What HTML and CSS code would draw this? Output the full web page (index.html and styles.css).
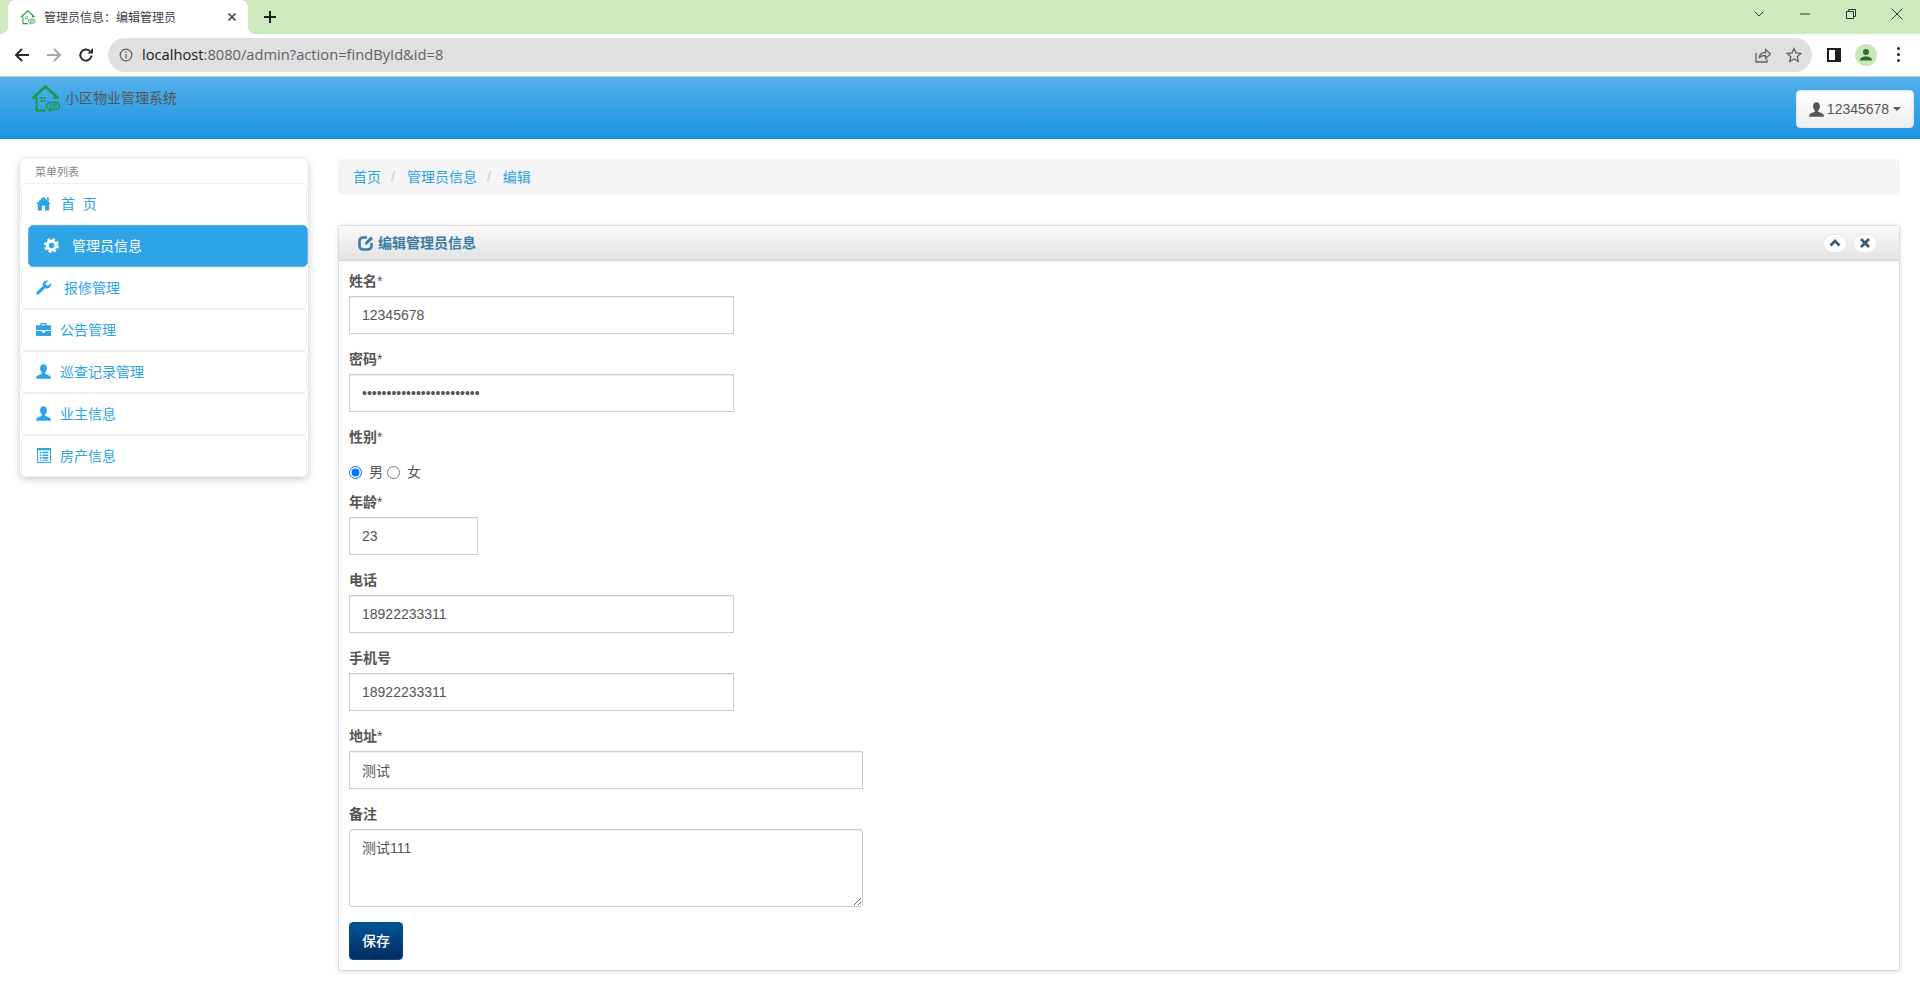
FILE: index.html
```html
<!DOCTYPE html>
<html lang="zh-CN">
<head>
<meta charset="utf-8">
<title>管理员信息：编辑管理员</title>
<link rel="stylesheet" href="styles.css">
</head>
<body>
<svg class="defs" width="0" height="0" aria-hidden="true">
  <symbol id="logo" viewBox="0 0 30 28">
    <path d="M1.5 13.5 14.5 1.5 27.5 13.5" fill="none" stroke="currentColor" stroke-width="2.4"/>
    <path d="M5.5 12v13.5h9M23.5 11v3" fill="none" stroke="currentColor" stroke-width="2"/>
    <path d="M9.5 12h2v2h-2zM12.5 12h2v2h-2zM9.5 15h2v2h-2zM12.5 15h2v2h-2z" fill="currentColor"/>
    <rect x="15.500" y="17.500" width="13" height="7" rx="3.500" fill="none" stroke="currentColor" stroke-width="1.400"/>
    <path d="M18 20h8M18 22h8" stroke="currentColor" stroke-width="1"/>
    <path d="M18.500 25v2.500l3-2.500z" fill="currentColor"/>
  </symbol>
  <symbol id="i-home" viewBox="0 0 14 14"><path d="M7 .8 14 7.400H12.300V13.500H8.500V9H5.500V13.500H1.700V7.400H0ZM10.200 1.500H12V5.200L10.200 3.500Z"/></symbol>
  <symbol id="i-user" viewBox="0 0 14 14"><path d="M7 .3C9 .3 10.200 1.800 10.200 4.100 10.200 5.700 9.400 7 8.600 7.800V9L13.400 11.200 14 13.700H0L.6 11.200 5.400 9V7.800C4.600 7 3.800 5.700 3.800 4.100 3.800 1.800 5 .3 7 .3Z"/></symbol>
  <symbol id="i-case" viewBox="0 0 14 14"><path fill-rule="evenodd" d="M5 1H9A1 1 0 0 1 10 2V3H14V7.500H0V3H4V2A1 1 0 0 1 5 1ZM5.200 2V3H8.800V2ZM0 8.500H5.500V9.800H8.500V8.500H14V13H0Z"/></symbol>
  <symbol id="i-wrench" viewBox="0 0 14 14"><path d="M14 2.800 11.300 5.300 9.500 4.800 9 3 11.500.6A4.200 4.200 0 0 0 6.300 5.700L.6 11.300A1.500 1.500 0 0 0 2.700 13.400L8.400 7.700A4.200 4.200 0 0 0 14 2.800Z"/></symbol>
  <symbol id="i-list" viewBox="0 0 14 14"><path fill-rule="evenodd" d="M1 0H14V14H1ZM2 2V13H13V2ZM3.500 3.500H5V5H3.500ZM6 3.500H11.500V5H6ZM3.500 6H5V7.500H3.500ZM6 6H11.500V7.500H6ZM3.500 8.500H5V10H3.500ZM6 8.500H11.500V10H6ZM3.500 11H5V12H3.500ZM6 11H11.500V12H6Z"/></symbol>
</svg>

<div class="tabstrip">
  <div class="tab">
    <svg class="tab-logo"><use href="#logo"/></svg>
    <span class="tab-title">管理员信息：编辑管理员</span>
    <svg class="tab-close" viewBox="0 0 10 10"><path d="M1.500 1.500 8.500 8.500M8.500 1.500 1.500 8.500"/></svg>
  </div>
  <svg class="new-tab" viewBox="0 0 12 12"><path d="M6 0V12M0 6H12"/></svg>
  <div class="win-controls">
    <svg class="win-ico" viewBox="0 0 14 14"><path d="M2.500 4.500 7 9 11.500 4.500"/></svg>
    <svg class="win-ico" viewBox="0 0 14 14"><path d="M2 7H12"/></svg>
    <svg class="win-ico" viewBox="0 0 14 14"><path d="M2.500 4.500H9.500V11.500H2.500ZM4.500 4.500V2.500H11.500V9.500H9.500"/></svg>
    <svg class="win-ico" viewBox="0 0 14 14"><path d="M1.500 1.500 12.500 12.500M12.500 1.500 1.500 12.500"/></svg>
  </div>
</div>

<div class="toolbar">
  <svg class="nav-ico" viewBox="0 0 16 16"><path d="M15 8H2M8 2 2 8 8 14"/></svg>
  <svg class="nav-ico nav-off" viewBox="0 0 16 16"><path d="M1 8H14M8 2 14 8 8 14"/></svg>
  <svg class="nav-ico" viewBox="0 0 16 16"><path d="M13.500 8.500A5.600 5.600 0 1 1 11.800 4"/><path class="solid" d="M9.500 6.500H15V1Z"/></svg>
  <div class="omnibox">
    <svg class="info-ico" viewBox="0 0 14 14"><circle cx="7" cy="7" r="5.800"/><path d="M7 6V10.500M7 3.500V5"/></svg>
    <span class="url"><span class="url-host">localhost</span>:8080/admin?action=findById&amp;id=8</span>
    <svg class="omni-ico" viewBox="0 0 16 16"><path d="M1 6V15H12V12.500M4 11C4.500 7.500 7 5.500 10.500 5.500V2.500L15.500 7 10.500 11.500V8.500C8 8.500 5.500 9 4 11Z"/></svg>
    <svg class="omni-ico" viewBox="0 0 16 16"><path d="M8 1.500 10 6 14.800 6.500 11.200 9.700 12.200 14.500 8 12 3.800 14.500 4.800 9.700 1.200 6.500 6 6Z"/></svg>
  </div>
  <svg class="panel-ico" viewBox="0 0 14 14"><path fill-rule="evenodd" d="M0 0H14V14H0ZM2 2V12H8V2Z"/></svg>
  <div class="avatar"><svg viewBox="0 0 14 14"><circle cx="7" cy="4" r="3"/><path d="M1 12.500C1 9.500 4 8.500 7 8.500S13 9.500 13 12.500Z"/></svg></div>
  <div class="dots"><i></i><i></i><i></i></div>
</div>

<header class="topbar">
  <div class="brand">
    <svg class="brand-logo"><use href="#logo"/></svg>
    <span class="brand-name">小区物业管理系统</span>
  </div>
  <button class="user-btn" type="button">
    <svg class="gly"><use href="#i-user"/></svg>
    <span>12345678</span>
    <span class="caret"></span>
  </button>
</header>

<div class="main">
  <aside class="sidebar">
    <div class="side-title">菜单列表</div>
    <a class="side-item"><svg class="gly"><use href="#i-home"/></svg><span class="lbl lbl-home">首&nbsp;&nbsp;页</span></a>
    <a class="side-item active">
      <svg class="gly" viewBox="0 0 14 14"><circle cx="7" cy="7" r="4" fill="none" stroke="currentColor" stroke-width="2.800"/><circle cx="7" cy="7" r="5.900" fill="none" stroke="currentColor" stroke-width="2" stroke-dasharray="2.600 2.030"/></svg>
      <span class="lbl lbl-active">管理员信息</span>
    </a>
    <a class="side-item"><svg class="gly"><use href="#i-wrench"/></svg><span class="lbl lbl-wrench">报修管理</span></a>
    <a class="side-item"><svg class="gly"><use href="#i-case"/></svg><span class="lbl">公告管理</span></a>
    <a class="side-item"><svg class="gly"><use href="#i-user"/></svg><span class="lbl">巡查记录管理</span></a>
    <a class="side-item"><svg class="gly"><use href="#i-user"/></svg><span class="lbl">业主信息</span></a>
    <a class="side-item"><svg class="gly"><use href="#i-list"/></svg><span class="lbl">房产信息</span></a>
  </aside>

  <section class="content">
    <nav class="crumbs">
      <a>首页</a><span class="sep">/</span><a>管理员信息</a><span class="sep">/</span><a>编辑</a>
    </nav>
    <div class="panel">
      <div class="panel-head">
        <h2 class="panel-title">
          <svg class="edit-ico" viewBox="0 0 16 16"><path class="edit-box" d="M9 2.500H5A3.500 3.500 0 0 0 1.500 6V11A3.500 3.500 0 0 0 5 14.500H10A3.500 3.500 0 0 0 13.500 11V8"/><path class="edit-pen" d="M7 7.500 12.800 1.500 15 3.700 9 9.500H7Z"/></svg>
          <span>编辑管理员信息</span>
        </h2>
        <div class="panel-tools">
          <span class="tool"><svg viewBox="0 0 12 12"><path d="M1.500 8.500 6 4 10.500 8.500"/></svg></span>
          <span class="tool"><svg viewBox="0 0 12 12"><path d="M2 2 10 10M10 2 2 10"/></svg></span>
        </div>
      </div>
      <form class="panel-body">
        <div class="group">
          <label class="field-label">姓名<span class="req">*</span></label>
          <input class="field w-md" type="text" value="12345678">
        </div>
        <div class="group">
          <label class="field-label">密码<span class="req">*</span></label>
          <input class="field w-md" type="password" value="123456789012345678901234">
        </div>
        <div class="group group-radio">
          <label class="field-label">性别<span class="req">*</span></label>
          <div class="radio-row">
            <input class="radio" type="radio" name="sex" checked><span class="radio-text">男</span>
            <input class="radio" type="radio" name="sex"><span class="radio-text">女</span>
          </div>
        </div>
        <div class="group">
          <label class="field-label">年龄<span class="req">*</span></label>
          <input class="field w-sm" type="text" value="23">
        </div>
        <div class="group">
          <label class="field-label">电话</label>
          <input class="field w-md" type="text" value="18922233311">
        </div>
        <div class="group">
          <label class="field-label">手机号</label>
          <input class="field w-md" type="text" value="18922233311">
        </div>
        <div class="group">
          <label class="field-label">地址<span class="req">*</span></label>
          <input class="field w-lg" type="text" value="测试">
        </div>
        <div class="group">
          <label class="field-label">备注</label>
          <textarea class="field area w-lg">测试111</textarea>
        </div>
        <button class="save" type="button">保存</button>
      </form>
    </div>
  </section>
</div>
</body>
</html>
```

FILE: styles.css
```css
* { box-sizing: border-box; }
html, body { margin: 0; padding: 0; height: 100%; overflow: hidden; background: #fff; }
body {
  font-family: "Liberation Sans", "Noto Sans CJK SC", sans-serif;
  font-size: 14px;
  line-height: 20px;
  color: #555;
}
.defs { position: absolute; }

/* browser chrome */
.tabstrip { height: 34px; background: #cdeabf; display: flex; align-items: flex-end; }
.tab {
  position: relative;
  width: 240px;
  height: 34px;
  margin-left: 8px;
  padding: 0 11px 0 12px;
  display: flex;
  align-items: center;
  background: #fff;
  border-radius: 8px 8px 0 0;
}
.tab::before, .tab::after {
  content: "";
  position: absolute;
  bottom: 0;
  width: 8px;
  height: 8px;
}
.tab::before { left: -8px; background: radial-gradient(circle at 0 0, #cdeabf 8px, #fff 8.500px); }
.tab::after { right: -8px; background: radial-gradient(circle at 100% 0, #cdeabf 8px, #fff 8.500px); }
.tab-logo { width: 16px; height: 15px; color: #2aa04a; margin-right: 8px; }
.tab-title { flex: 1; padding-top: 1px; font-size: 12px; color: #3c4043; white-space: nowrap; }
.tab-close { width: 10px; height: 10px; fill: none; stroke: #3c4043; stroke-width: 1.600; }
.new-tab { width: 12px; height: 12px; margin: 0 0 11px 16px; fill: none; stroke: #1f1f1f; stroke-width: 2; }
.win-controls { margin-left: auto; align-self: flex-start; display: flex; padding: 7px 16px 0 0; gap: 32px; }
.win-ico { width: 14px; height: 14px; fill: none; stroke: #333; stroke-width: 1; }

.toolbar {
  height: 43px;
  background: #fff;
  border-bottom: 1px solid #c9c9c9;
  display: flex;
  align-items: center;
  padding: 0 0 1px 14px;
}
.nav-ico { width: 16px; height: 16px; fill: none; stroke: #2b2b2b; stroke-width: 2; flex: none; }
.nav-ico + .nav-ico { margin-left: 16px; }
.nav-ico .solid { fill: #2b2b2b; stroke: none; }
.nav-off { stroke: #a6a6a6; }
.omnibox {
  flex: 1;
  height: 34px;
  margin: 0 15px 0 14px;
  padding: 0 10px 0 11px;
  background: #e0e0e0;
  border-radius: 17px;
  display: flex;
  align-items: center;
}
.info-ico { width: 14px; height: 14px; fill: none; stroke: #5f6368; stroke-width: 1.300; }
.url { flex: 1; margin: 0 0 1px 9px; font-family: "Open Sans", sans-serif; font-size: 14.700px; color: #5f6368; white-space: nowrap; }
.url-host { color: #202124; }
.omni-ico { width: 16px; height: 16px; margin-left: 15px; fill: none; stroke: #5f6368; stroke-width: 1.300; }
.panel-ico { width: 14px; height: 14px; fill: #1f1f1f; flex: none; }
.avatar { width: 22px; height: 22px; margin-left: 14px; border-radius: 50%; background: #c7e8b8; display: flex; align-items: center; justify-content: center; flex: none; }
.avatar svg { width: 14px; height: 14px; fill: #2d6b27; }
.dots { width: 3px; margin: 0 20px 0 20px; display: flex; flex-direction: column; gap: 3px; flex: none; }
.dots i { width: 3px; height: 3px; border-radius: 50%; background: #2b2b2b; }

/* top bar */
.topbar {
  height: 62px;
  background: linear-gradient(#55b0ea, #1a95e3);
  border-bottom: 1px solid #1788d0;
  display: flex;
  justify-content: space-between;
  align-items: flex-start;
}
.brand { display: flex; align-items: flex-start; padding: 8px 0 0 31px; }
.brand-logo { width: 30px; height: 28px; color: #1a9a3c; }
.brand-name { margin: 3px 0 0 4px; color: #555; line-height: 20px; }
.user-btn {
  width: 118px;
  height: 38px;
  margin: 13px 6px 0 0;
  padding: 0;
  border: 1px solid #e6e6e6;
  border-radius: 4px;
  background: linear-gradient(#fff, #eee);
  font: inherit;
  color: #555;
  display: flex;
  align-items: center;
  justify-content: center;
}
.user-btn .gly { fill: #555; margin-right: 3px; }
.caret { width: 0; height: 0; margin-left: 4px; border-top: 4px solid #555; border-left: 4px solid transparent; border-right: 4px solid transparent; }
.gly { width: 15px; height: 15px; fill: currentColor; flex: none; }

/* layout */
.main { display: flex; align-items: flex-start; padding: 20px 20px 0; gap: 30px; }

/* sidebar */
.sidebar {
  width: 288px;
  flex: none;
  padding: 0 1px;
  background: #fff;
  border-radius: 6px;
  box-shadow: 0 2px 9px rgba(0, 0, 0, .22);
}
.side-title { height: 24px; padding-left: 14px; font-size: 11px; line-height: 26px; color: #888; }
.side-item {
  height: 42px;
  padding-left: 14px;
  display: flex;
  align-items: center;
  color: #2ea3e6;
  border: 1px solid #eee;
  border-radius: 5px;
  background: #fff;
}
.side-item .gly { margin-bottom: 2px; }
.side-item.active {
  margin: 0 -1px 0 7px;
  padding-left: 15px;
  color: #fff;
  background: #2ea3e6;
  border-color: #5fb6e8;
}
.lbl { margin-left: 9px; }
.lbl-home { margin-left: 10px; }
.lbl-active { margin-left: 13px; }
.lbl-wrench { margin-left: 13px; }

/* breadcrumb */
.content { flex: 1; min-width: 0; }
.crumbs {
  height: 36px;
  padding: 0 15px;
  margin-bottom: 30px;
  display: flex;
  align-items: center;
  background: #f5f5f5;
  border-radius: 4px;
  color: #2ea3e6;
}
.sep { margin: 0 12px 0 10px; color: #ccc; }

/* panel */
.panel {
  height: 746px;
  background: #fff;
  border: 1px solid #ddd;
  border-radius: 3px;
  box-shadow: 0 1px 5px rgba(0, 0, 0, .12);
}
.panel-head {
  height: 35px;
  padding: 0 20px 0 19px;
  display: flex;
  justify-content: space-between;
  align-items: center;
  background: linear-gradient(#fafafa, #e3e3e3);
  border-bottom: 1px solid #d4d4d4;
}
.panel-title { margin: 0; display: flex; align-items: center; gap: 4px; font-size: 14px; font-weight: 700; color: #3a7ca5; }
.edit-ico { width: 16px; height: 16px; }
.edit-box { fill: none; stroke: #3a7ca5; stroke-width: 2.600; }
.edit-pen { fill: #3a7ca5; }
.panel-tools { display: flex; gap: 6px; padding-right: 2px; }
.tool {
  width: 24px;
  height: 19px;
  border-radius: 10px;
  background: #fff;
  border: 1px solid #e8e8e8;
  display: flex;
  align-items: center;
  justify-content: center;
}
.tool svg { width: 12px; height: 12px; fill: none; stroke: #3f5a6f; stroke-width: 2.800; }

/* form */
.panel-body { padding: 10px; }
.group { margin-bottom: 15px; }
.group-radio { margin-bottom: 10px; }
.field-label { display: block; margin-bottom: 5px; font-weight: 600; color: #555; }
.req { font-weight: 400; }
.field {
  display: block;
  height: 38px;
  padding: 6px 12px;
  border: 1px solid #ccc;
  border-radius: 0;
  background: #fff;
  font: inherit;
  color: #555;
  box-shadow: inset 0 1px 1px rgba(0, 0, 0, .075);
  outline: none;
}
.w-md { width: 385px; }
.w-sm { width: 129px; }
.w-lg { width: 514px; }
.area { height: 78px; border-radius: 3px; padding-top: 8px; }
.radio-row { height: 20px; margin-top: 15px; display: flex; align-items: center; }
.radio { width: 13px; height: 13px; margin: 0; }
.radio-text { margin: 0 4px 0 7px; }
.save {
  display: block;
  width: 54px;
  height: 38px;
  padding: 0;
  border: 1px solid #0b4a85;
  border-radius: 4px;
  background: linear-gradient(#00549a, #002e5f);
  color: #fff;
  font: inherit;
  font-weight: 500;
}
```
